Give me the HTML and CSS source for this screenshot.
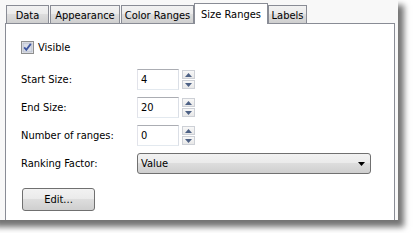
FILE: index.html
```html
<!DOCTYPE html>
<html>
<head>
<meta charset="utf-8">
<link rel="stylesheet" href="styles.css">
</head>
<body>
<div class="window">
  <div class="tabs">
    <div class="tab tab-data">Data</div>
    <div class="tab tab-app">Appearance</div>
    <div class="tab tab-color">Color Ranges</div>
    <div class="tab tab-size active">Size Ranges</div>
    <div class="tab tab-labels">Labels</div>
  </div>
  <div class="panel">
    <label class="check-row">
      <span class="checkbox">
        <svg width="13" height="13" viewBox="0 0 13 13">
          <rect x="0.5" y="0.5" width="12" height="12" fill="#f4f4f4" stroke="#8e8f8f"/>
          <rect x="2" y="2" width="9" height="9" fill="#d9dde6" stroke="#b6bccb" stroke-width="1"/>
          <path d="M3.2 6.4 L5.3 8.8 L9.8 2.9" fill="none" stroke="#3d55a0" stroke-width="1.8"/>
        </svg>
      </span>
      <span>Visible</span>
    </label>
    <div class="form">
      <div class="label">Start Size:</div>
      <div class="control">
        <div class="input">4</div>
        <div class="spin">
          <div class="spin-btn"><svg width="7" height="4" viewBox="0 0 7 4"><path d="M0 4 L3.5 0 L7 4 Z" fill="#4d6185"/></svg></div>
          <div class="spin-btn"><svg width="7" height="4" viewBox="0 0 7 4"><path d="M0 0 L3.5 4 L7 0 Z" fill="#4d6185"/></svg></div>
        </div>
      </div>
      <div class="label">End Size:</div>
      <div class="control">
        <div class="input">20</div>
        <div class="spin">
          <div class="spin-btn"><svg width="7" height="4" viewBox="0 0 7 4"><path d="M0 4 L3.5 0 L7 4 Z" fill="#4d6185"/></svg></div>
          <div class="spin-btn"><svg width="7" height="4" viewBox="0 0 7 4"><path d="M0 0 L3.5 4 L7 0 Z" fill="#4d6185"/></svg></div>
        </div>
      </div>
      <div class="label">Number of ranges:</div>
      <div class="control">
        <div class="input">0</div>
        <div class="spin">
          <div class="spin-btn"><svg width="7" height="4" viewBox="0 0 7 4"><path d="M0 4 L3.5 0 L7 4 Z" fill="#4d6185"/></svg></div>
          <div class="spin-btn"><svg width="7" height="4" viewBox="0 0 7 4"><path d="M0 0 L3.5 4 L7 0 Z" fill="#4d6185"/></svg></div>
        </div>
      </div>
      <div class="label">Ranking Factor:</div>
      <div class="control">
        <div class="select">
          <span>Value</span>
          <svg width="7" height="4" viewBox="0 0 7 4"><path d="M0 0 L3.5 4 L7 0 Z" fill="#000"/></svg>
        </div>
      </div>
    </div>
    <div class="button">Edit...</div>
  </div>
</div>
</body>
</html>
```
FILE: styles.css
```css
html, body {
  margin: 0;
  padding: 0;
  background: #ffffff;
}
body {
  font-family: "DejaVu Sans Condensed", "Liberation Sans", sans-serif;
  font-size: 11px;
  color: #000;
  width: 413px;
  height: 233px;
  overflow: hidden;
}
.window {
  box-sizing: border-box;
  margin-left: -10px;
  width: 408px;
  height: 220px;
  padding: 3px 0 0 15px;
  background: #f8f8f8;
  box-shadow: 5px 6px 6px 1px rgba(0, 0, 0, 0.55);
  overflow: hidden;
}
.tabs {
  display: flex;
  align-items: flex-end;
  height: 20px;
  padding-left: 1px;
  position: relative;
  z-index: 1;
}
.tab {
  box-sizing: border-box;
  height: 18px;
  border: 1px solid #898c95;
  border-bottom: none;
  background: linear-gradient(#f2f2f2 0%, #ebebeb 45%, #dddddd 50%, #cfcfcf 100%);
  display: flex;
  align-items: center;
  justify-content: center;
  margin-right: 1px;
  white-space: nowrap;
  padding-top: 1px;
}
.tab-data { width: 43px; }
.tab-app { width: 70px; }
.tab-color { width: 73px; margin-right: 0; }
.tab-size { width: 74px; }
.tab-labels { width: 39px; }
.tab.active {
  height: 21px;
  background: #ffffff;
  margin-bottom: -1px;
  padding-bottom: 1px;
  margin-right: 0;
}
.panel {
  box-sizing: border-box;
  width: 390px;
  height: 210px;
  border: 1px solid #898c95;
  background: #ffffff;
  padding: 17px 0 0 15px;
}
.check-row {
  display: flex;
  align-items: center;
  gap: 4px;
  height: 13px;
}
.checkbox {
  display: flex;
  width: 13px;
  height: 13px;
}
.form {
  display: grid;
  grid-template-columns: 116px auto;
  grid-auto-rows: 21px;
  row-gap: 7px;
  margin-top: 15px;
}
.label {
  display: flex;
  align-items: center;
}
.control {
  display: flex;
  align-items: center;
  gap: 3px;
}
.input {
  box-sizing: border-box;
  width: 42px;
  height: 21px;
  border: 1px solid #abadb3;
  border-color: #abadb3 #dbdfe6 #e3e9ef #e2e3ea;
  padding-left: 3px;
  display: flex;
  align-items: center;
}
.spin {
  display: flex;
  flex-direction: column;
  gap: 1px;
}
.spin-btn {
  box-sizing: border-box;
  width: 13px;
  height: 9px;
  border: 1px solid #cdd0d6;
  background: linear-gradient(#f8f8f8, #e8e8e8);
  display: flex;
  align-items: center;
  justify-content: center;
}
.select {
  box-sizing: border-box;
  width: 234px;
  height: 21px;
  border: 1px solid #707070;
  border-radius: 3px;
  background: linear-gradient(#f2f2f2 0%, #ebebeb 45%, #dddddd 50%, #cfcfcf 100%);
  display: flex;
  align-items: center;
  justify-content: space-between;
  padding: 0 5px 0 3px;
}
.button {
  box-sizing: border-box;
  width: 73px;
  height: 23px;
  margin: 14px 0 0 1px;
  border: 1px solid #707070;
  border-radius: 3px;
  background: linear-gradient(#f2f2f2 0%, #ebebeb 45%, #dddddd 50%, #cfcfcf 100%);
  display: flex;
  align-items: center;
  justify-content: center;
}
```
